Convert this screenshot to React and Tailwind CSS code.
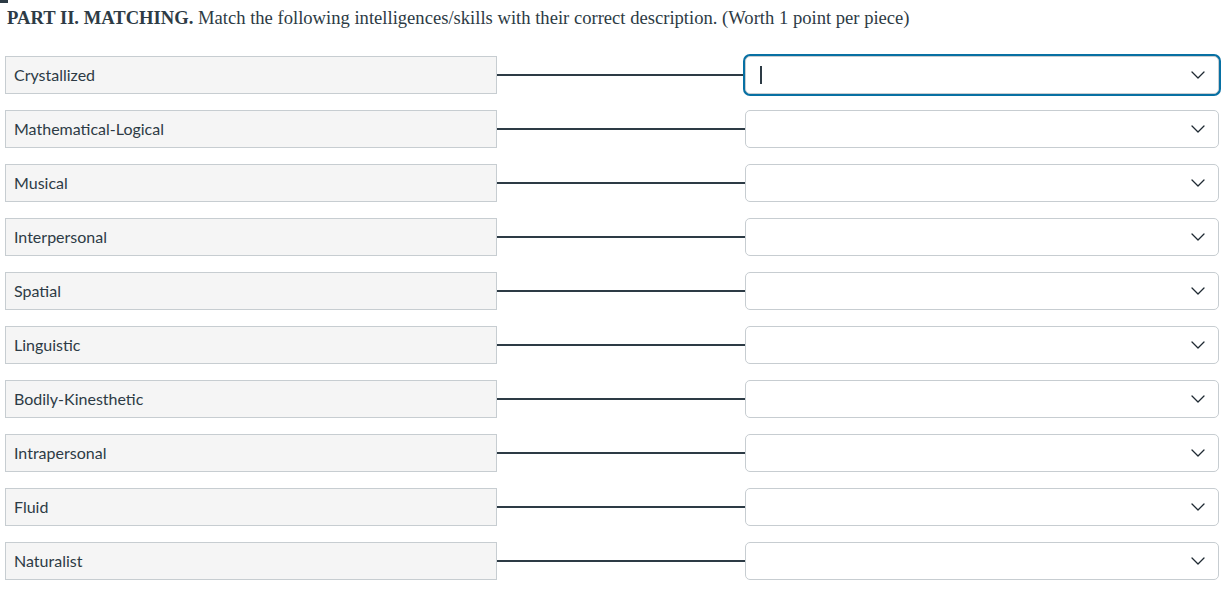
import { ChevronDown } from 'lucide-react';

const items = [
  'Crystallized',
  'Mathematical-Logical',
  'Musical',
  'Interpersonal',
  'Spatial',
  'Linguistic',
  'Bodily-Kinesthetic',
  'Intrapersonal',
  'Fluid',
  'Naturalist',
];

export default function App() {
  return (
    <div className="relative min-h-[593px] bg-white text-[#2d3b45]">
      {/* little dark tab top-left */}
      <div className="absolute left-0 top-0 h-[3px] w-[8px] bg-[#2d3b45]"></div>

      {/* Heading */}
      <p
        className="pl-[7px] pt-[6px] text-[18.6px] leading-[24px]"
        style={{ fontFamily: '"Liberation Serif", "Times New Roman", serif' }}
      >
        <b>PART II. MATCHING.</b> Match the following intelligences/skills with their correct description. (Worth 1 point per piece)
      </p>

      {/* Rows */}
      <div className="mt-[26px] flex flex-col gap-[16px] pl-[5px] pr-[7px]">
        {items.map((item, i) => (
          <div key={item} className="flex h-[38px] items-center">
            <div
              className="flex h-full w-[492px] items-center border border-[#c7cdd1] bg-[#f5f5f5] px-[8px] text-[16px]"
              style={{ fontFamily: 'Lato, "Noto Sans", sans-serif' }}
            >
              {item}
            </div>
            <div className="h-[2px] w-[248px] bg-[#2d3b45]"></div>
            <div
              className={`flex h-full flex-1 items-center justify-between rounded-[5px] border border-[#c7cdd1] bg-white pl-[14px] pr-[8px] ${
                i === 0 ? 'ring-2 ring-[#0770a3]' : ''
              }`}
            >
              <span>{i === 0 ? <span className="inline-block h-[18px] w-[2px] translate-y-[3px] bg-[#2d3b45]"></span> : ''}</span>
              <ChevronDown className="h-[24px] w-[24px] text-[#1f2a33]" strokeWidth={1.3} />
            </div>
          </div>
        ))}
      </div>
    </div>
  );
}
